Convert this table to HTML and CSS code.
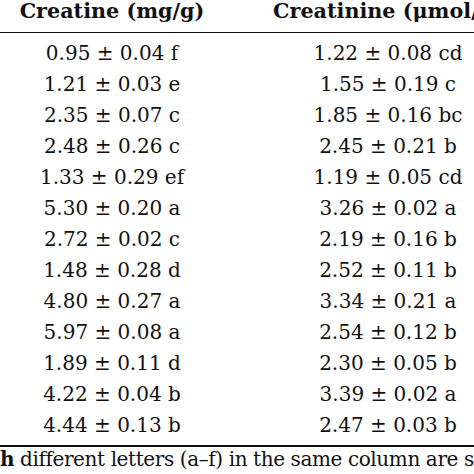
FILE: index.html
```html
<!DOCTYPE html>
<html lang="en">
<head>
<meta charset="utf-8">
<title>Creatine and creatinine table</title>
<link rel="stylesheet" href="styles.css">
</head>
<body>
<div class="sheet">
  <div class="table">
    <div class="head">
      <div class="cell">Creatine (mg/g)</div>
      <div class="cell">Creatinine (μmol/g)</div>
    </div>
    <div class="body">
      <div class="cell">0.95 ± 0.04 f</div><div class="cell">1.22 ± 0.08 cd</div>
      <div class="cell">1.21 ± 0.03 e</div><div class="cell">1.55 ± 0.19 c</div>
      <div class="cell">2.35 ± 0.07 c</div><div class="cell">1.85 ± 0.16 bc</div>
      <div class="cell">2.48 ± 0.26 c</div><div class="cell">2.45 ± 0.21 b</div>
      <div class="cell">1.33 ± 0.29 ef</div><div class="cell">1.19 ± 0.05 cd</div>
      <div class="cell">5.30 ± 0.20 a</div><div class="cell">3.26 ± 0.02 a</div>
      <div class="cell">2.72 ± 0.02 c</div><div class="cell">2.19 ± 0.16 b</div>
      <div class="cell">1.48 ± 0.28 d</div><div class="cell">2.52 ± 0.11 b</div>
      <div class="cell">4.80 ± 0.27 a</div><div class="cell">3.34 ± 0.21 a</div>
      <div class="cell">5.97 ± 0.08 a</div><div class="cell">2.54 ± 0.12 b</div>
      <div class="cell">1.89 ± 0.11 d</div><div class="cell">2.30 ± 0.05 b</div>
      <div class="cell">4.22 ± 0.04 b</div><div class="cell">3.39 ± 0.02 a</div>
      <div class="cell">4.44 ± 0.13 b</div><div class="cell">2.47 ± 0.03 b</div>
    </div>
  </div>
  <p class="note"><b>h</b> different letters (a–f) in the same column are significantly different</p>
</div>
</body>
</html>
```
FILE: styles.css
```css
html, body {
  margin: 0;
  padding: 0;
  background: #ffffff;
}
body {
  width: 474px;
  height: 474px;
  overflow: hidden;
  font-family: "DejaVu Serif", serif;
  color: #111111;
}
.sheet {
  width: 474px;
  overflow: hidden;
}
.table {
  width: 552px;
  margin-left: -26px;
}
.head, .body {
  display: grid;
  grid-template-columns: 276px 276px;
}
.head {
  font-weight: bold;
  font-size: 20.7px;
  line-height: 22px;
  padding-bottom: 10px;
  border-bottom: 1.5px solid #111111;
}
.body {
  font-size: 20px;
  line-height: 31px;
  padding-top: 5px;
  padding-bottom: 3.5px;
  border-bottom: 2px solid #111111;
}
.cell {
  text-align: center;
  white-space: nowrap;
}
.note {
  margin: 0;
  font-size: 20px;
  line-height: 24px;
  letter-spacing: -0.4px;
  white-space: nowrap;
}
.note b {
  font-weight: bold;
}
```
